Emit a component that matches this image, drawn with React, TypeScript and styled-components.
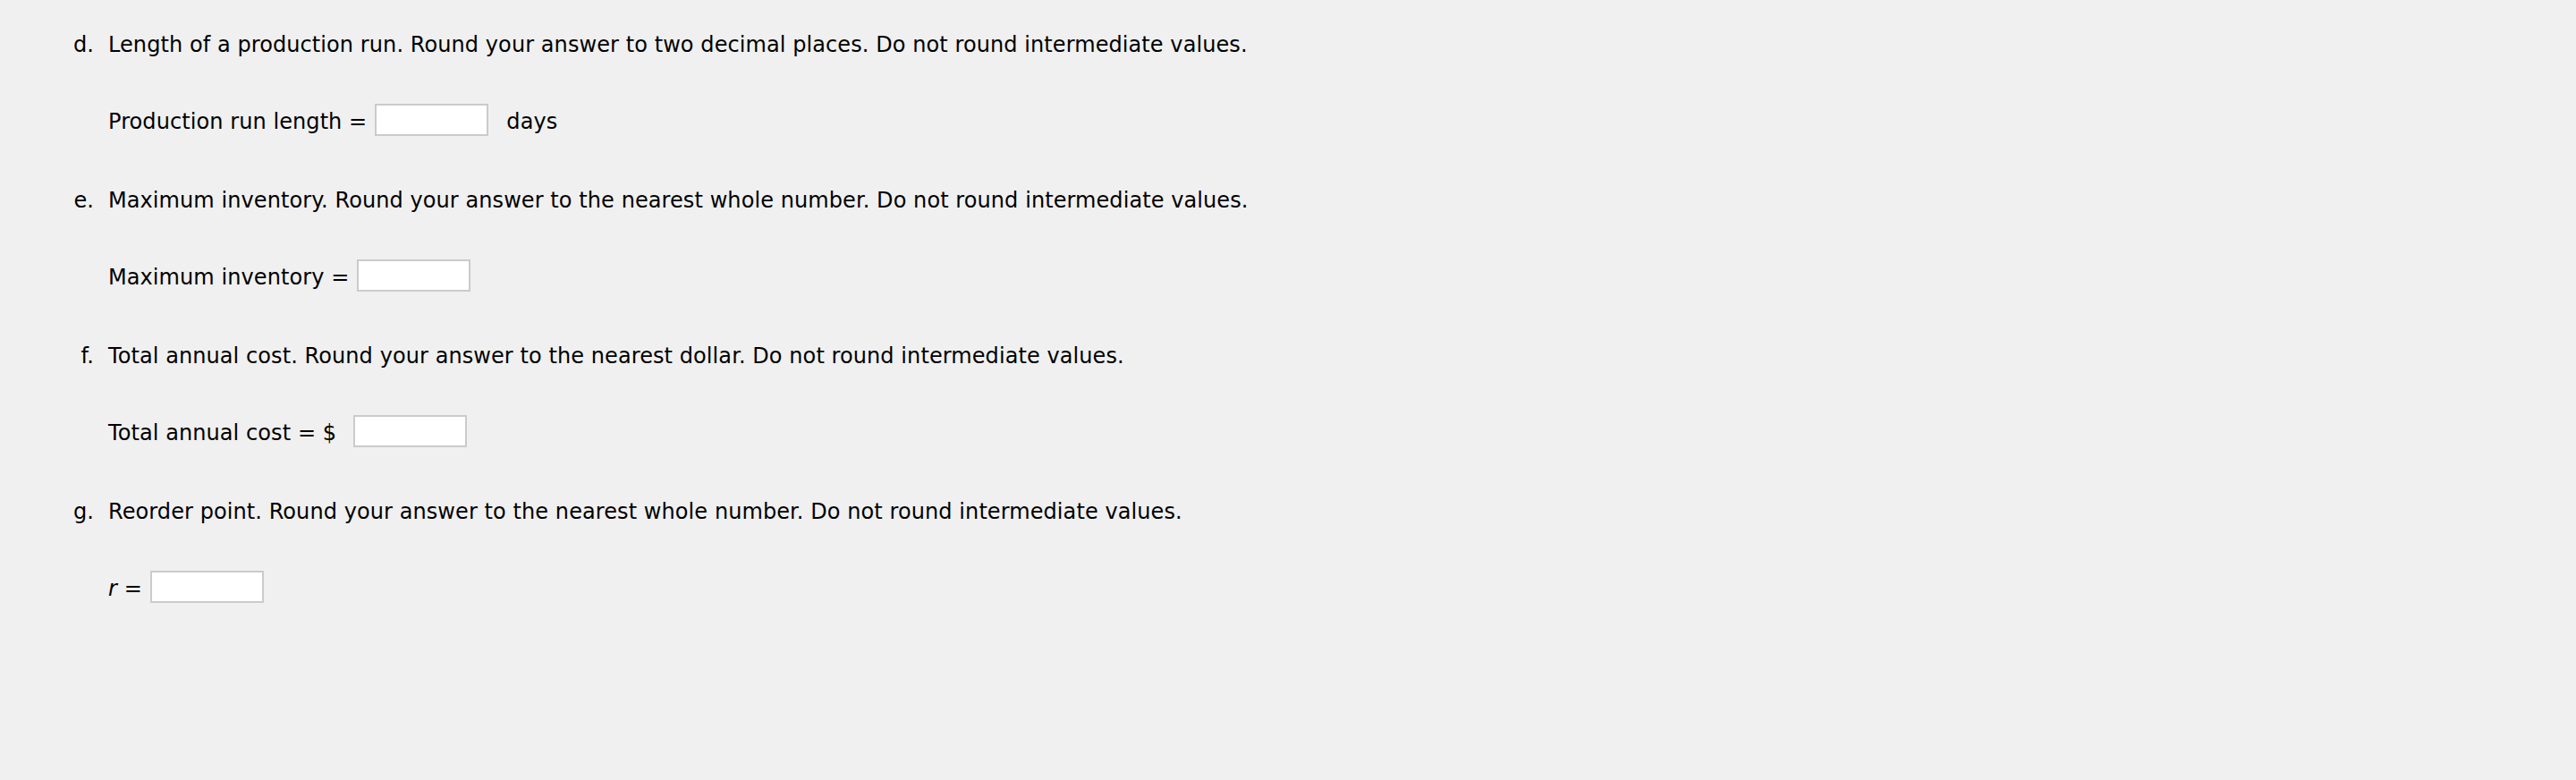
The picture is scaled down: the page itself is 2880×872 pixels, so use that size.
import React from 'react';
import styled, { createGlobalStyle } from 'styled-components';

const GlobalStyle = createGlobalStyle`
  html, body {
    margin: 0;
    padding: 0;
    background: #f0f0f0;
  }

  body {
    font-family: 'DejaVu Sans', Verdana, sans-serif;
    color: #000;
  }
`;

export const Page = styled.div`
  min-height: 872px;
  padding: 35px 0 0 63px;
  box-sizing: border-box;
  display: flex;
  flex-direction: column;
  gap: 57px;
`;

export const Part = styled.section`
  display: flex;
  flex-direction: column;
  gap: 51px;
`;

export const Heading = styled.div`
  display: flex;
  align-items: flex-start;
  gap: 16px;
  font-size: 24px;
  line-height: 30px;
  letter-spacing: 0.08px;
`;

export const Marker = styled.span`
  width: 42px;
  flex: none;
  text-align: right;
`;

export const AnswerRow = styled.div`
  display: flex;
  align-items: flex-start;
  padding-left: 58px;
  font-size: 24px;
  line-height: 30px;
  letter-spacing: 0.08px;
`;

export const Label = styled.span`
  padding-top: 5px;
  white-space: pre;
`;

export const Variable = styled.i`
  font-style: italic;
`;

export const AnswerBox = styled.input<{ $gap?: number }>`
  box-sizing: border-box;
  width: 127px;
  height: 36px;
  margin: 0 0 0 ${(p) => p.$gap ?? 9}px;
  padding: 0 6px;
  border: 2px solid #cbcbcb;
  background: #fff;
  font: inherit;
  outline: none;
`;

export const Unit = styled.span`
  padding-top: 5px;
  margin-left: 20px;
`;

type Question = {
  marker: string;
  text: string;
  label: React.ReactNode;
  gap?: number;
  unit?: string;
};

const questions: Question[] = [
  {
    marker: 'd.',
    text: 'Length of a production run. Round your answer to two decimal places. Do not round intermediate values.',
    label: 'Production run length =',
    unit: 'days',
  },
  {
    marker: 'e.',
    text: 'Maximum inventory. Round your answer to the nearest whole number. Do not round intermediate values.',
    label: 'Maximum inventory =',
  },
  {
    marker: 'f.',
    text: 'Total annual cost. Round your answer to the nearest dollar. Do not round intermediate values.',
    label: 'Total annual cost = $',
    gap: 19,
  },
  {
    marker: 'g.',
    text: 'Reorder point. Round your answer to the nearest whole number. Do not round intermediate values.',
    label: (
      <>
        <Variable>r</Variable> =
      </>
    ),
  },
];

export default function App() {
  return (
    <>
      <GlobalStyle />
      <Page>
        {questions.map((q) => (
          <Part key={q.marker}>
            <Heading>
              <Marker>{q.marker}</Marker>
              <span>{q.text}</span>
            </Heading>
            <AnswerRow>
              <Label>{q.label}</Label>
              <AnswerBox type="text" $gap={q.gap} aria-label={q.marker} />
              {q.unit && <Unit>{q.unit}</Unit>}
            </AnswerRow>
          </Part>
        ))}
      </Page>
    </>
  );
}
